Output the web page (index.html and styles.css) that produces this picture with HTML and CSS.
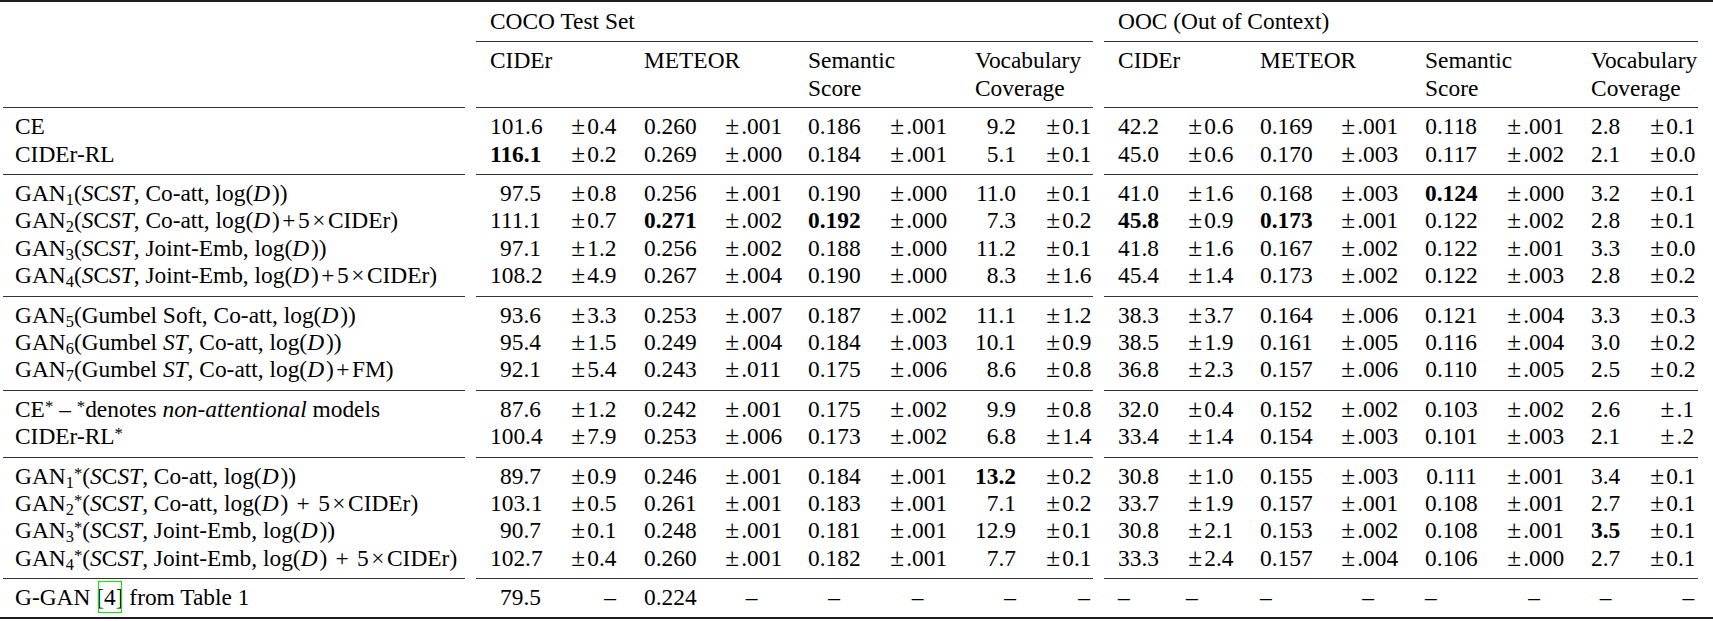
FILE: index.html
```html
<!DOCTYPE html>
<html>
<head>
<meta charset="utf-8">
<title>Results table</title>
<link rel="stylesheet" href="styles.css">
</head>
<body>
<table class="results">
<colgroup>
<col class="c-label">
<col class="c1"><col class="c2"><col class="c3"><col class="c4"><col class="c5"><col class="c6"><col class="c7"><col class="c8">
<col class="c9"><col class="c10"><col class="c11"><col class="c12"><col class="c13"><col class="c14"><col class="c15"><col class="c16">
</colgroup>
<tbody>
<tr class="grp"><td class="label"></td><td colspan="8">COCO Test Set</td><td colspan="8">OOC (Out of Context)</td></tr>
<tr class="rule cmid"><td></td><td colspan="8"><div class="line mid"></div></td><td colspan="8"><div class="line end"></div></td></tr>
<tr class="metric">
<td class="label"></td>
<td colspan="2">CIDEr</td><td colspan="2">METEOR</td><td colspan="2">Semantic<br>Score</td><td colspan="2">Vocabulary<br>Coverage</td>
<td colspan="2">CIDEr</td><td colspan="2">METEOR</td><td colspan="2">Semantic<br>Score</td><td colspan="2">Vocabulary<br>Coverage</td>
</tr>
<tr class="rule head"><td><div class="line first"></div></td><td colspan="8"><div class="line mid"></div></td><td colspan="8"><div class="line end"></div></td></tr>

<tr><td class="label">CE</td><td>101.6</td><td><span class="pm">±</span>0.4</td><td>0.260</td><td><span class="pm">±</span>.001</td><td>0.186</td><td><span class="pm">±</span>.001</td><td>9.2</td><td><span class="pm">±</span>0.1</td><td>42.2</td><td><span class="pm">±</span>0.6</td><td>0.169</td><td><span class="pm">±</span>.001</td><td>0.118</td><td><span class="pm">±</span>.001</td><td>2.8</td><td class="lastc"><span class="pm">±</span>0.1</td></tr>
<tr><td class="label">CIDEr-RL</td><td><b>116.1</b></td><td><span class="pm">±</span>0.2</td><td>0.269</td><td><span class="pm">±</span>.000</td><td>0.184</td><td><span class="pm">±</span>.001</td><td>5.1</td><td><span class="pm">±</span>0.1</td><td>45.0</td><td><span class="pm">±</span>0.6</td><td>0.170</td><td><span class="pm">±</span>.003</td><td>0.117</td><td><span class="pm">±</span>.002</td><td>2.1</td><td class="lastc"><span class="pm">±</span>0.0</td></tr>
<tr class="rule"><td><div class="line first"></div></td><td colspan="8"><div class="line mid"></div></td><td colspan="8"><div class="line end"></div></td></tr>

<tr><td class="label">GAN<sub>1</sub>(<i>S</i>C<i>ST</i>, Co-att, log(<i class="mi">D</i>))</td><td>97.5</td><td><span class="pm">±</span>0.8</td><td>0.256</td><td><span class="pm">±</span>.001</td><td>0.190</td><td><span class="pm">±</span>.000</td><td>11.0</td><td><span class="pm">±</span>0.1</td><td>41.0</td><td><span class="pm">±</span>1.6</td><td>0.168</td><td><span class="pm">±</span>.003</td><td><b>0.124</b></td><td><span class="pm">±</span>.000</td><td>3.2</td><td class="lastc"><span class="pm">±</span>0.1</td></tr>
<tr><td class="label">GAN<sub>2</sub>(<i>S</i>C<i>ST</i>, Co-att, log(<i class="mi">D</i>)<span class="op">+</span>5<span class="op">×</span>CIDEr)</td><td>111.1</td><td><span class="pm">±</span>0.7</td><td><b>0.271</b></td><td><span class="pm">±</span>.002</td><td><b>0.192</b></td><td><span class="pm">±</span>.000</td><td>7.3</td><td><span class="pm">±</span>0.2</td><td><b>45.8</b></td><td><span class="pm">±</span>0.9</td><td><b>0.173</b></td><td><span class="pm">±</span>.001</td><td>0.122</td><td><span class="pm">±</span>.002</td><td>2.8</td><td class="lastc"><span class="pm">±</span>0.1</td></tr>
<tr><td class="label">GAN<sub>3</sub>(<i>S</i>C<i>ST</i>, Joint-Emb, log(<i class="mi">D</i>))</td><td>97.1</td><td><span class="pm">±</span>1.2</td><td>0.256</td><td><span class="pm">±</span>.002</td><td>0.188</td><td><span class="pm">±</span>.000</td><td>11.2</td><td><span class="pm">±</span>0.1</td><td>41.8</td><td><span class="pm">±</span>1.6</td><td>0.167</td><td><span class="pm">±</span>.002</td><td>0.122</td><td><span class="pm">±</span>.001</td><td>3.3</td><td class="lastc"><span class="pm">±</span>0.0</td></tr>
<tr><td class="label">GAN<sub>4</sub>(<i>S</i>C<i>ST</i>, Joint-Emb, log(<i class="mi">D</i>)<span class="op">+</span>5<span class="op">×</span>CIDEr)</td><td>108.2</td><td><span class="pm">±</span>4.9</td><td>0.267</td><td><span class="pm">±</span>.004</td><td>0.190</td><td><span class="pm">±</span>.000</td><td>8.3</td><td><span class="pm">±</span>1.6</td><td>45.4</td><td><span class="pm">±</span>1.4</td><td>0.173</td><td><span class="pm">±</span>.002</td><td>0.122</td><td><span class="pm">±</span>.003</td><td>2.8</td><td class="lastc"><span class="pm">±</span>0.2</td></tr>
<tr class="rule"><td><div class="line first"></div></td><td colspan="8"><div class="line mid"></div></td><td colspan="8"><div class="line end"></div></td></tr>

<tr><td class="label">GAN<sub>5</sub>(Gumbel Soft, Co-att, log(<i class="mi">D</i>))</td><td>93.6</td><td><span class="pm">±</span>3.3</td><td>0.253</td><td><span class="pm">±</span>.007</td><td>0.187</td><td><span class="pm">±</span>.002</td><td>11.1</td><td><span class="pm">±</span>1.2</td><td>38.3</td><td><span class="pm">±</span>3.7</td><td>0.164</td><td><span class="pm">±</span>.006</td><td>0.121</td><td><span class="pm">±</span>.004</td><td>3.3</td><td class="lastc"><span class="pm">±</span>0.3</td></tr>
<tr><td class="label">GAN<sub>6</sub>(Gumbel <i>ST</i>, Co-att, log(<i class="mi">D</i>))</td><td>95.4</td><td><span class="pm">±</span>1.5</td><td>0.249</td><td><span class="pm">±</span>.004</td><td>0.184</td><td><span class="pm">±</span>.003</td><td>10.1</td><td><span class="pm">±</span>0.9</td><td>38.5</td><td><span class="pm">±</span>1.9</td><td>0.161</td><td><span class="pm">±</span>.005</td><td>0.116</td><td><span class="pm">±</span>.004</td><td>3.0</td><td class="lastc"><span class="pm">±</span>0.2</td></tr>
<tr><td class="label">GAN<sub>7</sub>(Gumbel <i>ST</i>, Co-att, log(<i class="mi">D</i>)<span class="op">+</span>FM)</td><td>92.1</td><td><span class="pm">±</span>5.4</td><td>0.243</td><td><span class="pm">±</span>.011</td><td>0.175</td><td><span class="pm">±</span>.006</td><td>8.6</td><td><span class="pm">±</span>0.8</td><td>36.8</td><td><span class="pm">±</span>2.3</td><td>0.157</td><td><span class="pm">±</span>.006</td><td>0.110</td><td><span class="pm">±</span>.005</td><td>2.5</td><td class="lastc"><span class="pm">±</span>0.2</td></tr>
<tr class="rule"><td><div class="line first"></div></td><td colspan="8"><div class="line mid"></div></td><td colspan="8"><div class="line end"></div></td></tr>

<tr><td class="label">CE<sup class="ast">*</sup> – <sup class="ast">*</sup>denotes <i>non-attentional</i> models</td><td>87.6</td><td><span class="pm">±</span>1.2</td><td>0.242</td><td><span class="pm">±</span>.001</td><td>0.175</td><td><span class="pm">±</span>.002</td><td>9.9</td><td><span class="pm">±</span>0.8</td><td>32.0</td><td><span class="pm">±</span>0.4</td><td>0.152</td><td><span class="pm">±</span>.002</td><td>0.103</td><td><span class="pm">±</span>.002</td><td>2.6</td><td class="lastc"><span class="pm">±</span>.1</td></tr>
<tr><td class="label">CIDEr-RL<sup class="ast">*</sup></td><td>100.4</td><td><span class="pm">±</span>7.9</td><td>0.253</td><td><span class="pm">±</span>.006</td><td>0.173</td><td><span class="pm">±</span>.002</td><td>6.8</td><td><span class="pm">±</span>1.4</td><td>33.4</td><td><span class="pm">±</span>1.4</td><td>0.154</td><td><span class="pm">±</span>.003</td><td>0.101</td><td><span class="pm">±</span>.003</td><td>2.1</td><td class="lastc"><span class="pm">±</span>.2</td></tr>
<tr class="rule"><td><div class="line first"></div></td><td colspan="8"><div class="line mid"></div></td><td colspan="8"><div class="line end"></div></td></tr>

<tr><td class="label">GAN<sub>1</sub><sup class="ast">*</sup>(<i>S</i>C<i>ST</i>, Co-att, log(<i class="mi">D</i>))</td><td>89.7</td><td><span class="pm">±</span>0.9</td><td>0.246</td><td><span class="pm">±</span>.001</td><td>0.184</td><td><span class="pm">±</span>.001</td><td><b>13.2</b></td><td><span class="pm">±</span>0.2</td><td>30.8</td><td><span class="pm">±</span>1.0</td><td>0.155</td><td><span class="pm">±</span>.003</td><td>0.111</td><td><span class="pm">±</span>.001</td><td>3.4</td><td class="lastc"><span class="pm">±</span>0.1</td></tr>
<tr><td class="label">GAN<sub>2</sub><sup class="ast">*</sup>(<i>S</i>C<i>ST</i>, Co-att, log(<i class="mi">D</i>) <span class="op">+</span> 5<span class="op">×</span>CIDEr)</td><td>103.1</td><td><span class="pm">±</span>0.5</td><td>0.261</td><td><span class="pm">±</span>.001</td><td>0.183</td><td><span class="pm">±</span>.001</td><td>7.1</td><td><span class="pm">±</span>0.2</td><td>33.7</td><td><span class="pm">±</span>1.9</td><td>0.157</td><td><span class="pm">±</span>.001</td><td>0.108</td><td><span class="pm">±</span>.001</td><td>2.7</td><td class="lastc"><span class="pm">±</span>0.1</td></tr>
<tr><td class="label">GAN<sub>3</sub><sup class="ast">*</sup>(<i>S</i>C<i>ST</i>, Joint-Emb, log(<i class="mi">D</i>))</td><td>90.7</td><td><span class="pm">±</span>0.1</td><td>0.248</td><td><span class="pm">±</span>.001</td><td>0.181</td><td><span class="pm">±</span>.001</td><td>12.9</td><td><span class="pm">±</span>0.1</td><td>30.8</td><td><span class="pm">±</span>2.1</td><td>0.153</td><td><span class="pm">±</span>.002</td><td>0.108</td><td><span class="pm">±</span>.001</td><td><b>3.5</b></td><td class="lastc"><span class="pm">±</span>0.1</td></tr>
<tr><td class="label">GAN<sub>4</sub><sup class="ast">*</sup>(<i>S</i>C<i>ST</i>, Joint-Emb, log(<i class="mi">D</i>) <span class="op">+</span> 5<span class="op">×</span>CIDEr)</td><td>102.7</td><td><span class="pm">±</span>0.4</td><td>0.260</td><td><span class="pm">±</span>.001</td><td>0.182</td><td><span class="pm">±</span>.001</td><td>7.7</td><td><span class="pm">±</span>0.1</td><td>33.3</td><td><span class="pm">±</span>2.4</td><td>0.157</td><td><span class="pm">±</span>.004</td><td>0.106</td><td><span class="pm">±</span>.000</td><td>2.7</td><td class="lastc"><span class="pm">±</span>0.1</td></tr>
<tr class="rule"><td><div class="line first"></div></td><td colspan="8"><div class="line mid"></div></td><td colspan="8"><div class="line end"></div></td></tr>

<tr class="last"><td class="label">G-GAN [<span class="cite">4</span>] from Table 1</td><td>79.5</td><td>–</td><td>0.224</td><td class="dc">–</td><td class="dc">–</td><td class="dc">–</td><td>–</td><td>–</td><td class="dl">–</td><td class="dl">–</td><td class="dl">–</td><td class="dc">–</td><td class="dl">–</td><td class="dc">–</td><td class="dc">–</td><td class="lastc">–</td></tr>
</tbody>
</table>
</body>
</html>
```

FILE: styles.css
```css
html, body {
  margin: 0;
  padding: 0;
  background: #ffffff;
}

body {
  font-family: "Liberation Serif", "Tinos", "Times New Roman", serif;
  font-size: 23.4px;
  color: #000000;
}

.results {
  width: 1713px;
  table-layout: fixed;
  border-collapse: separate;
  border-spacing: 0;
  border-top: 2px solid #1e1e1e;
  border-bottom: 2px solid #1e1e1e;
  font-family: "Liberation Serif", "Tinos", "Times New Roman", serif;
  font-size: 23.4px;
}

.c-label { width: 476px; }
.c1 { width: 79px; }
.c2 { width: 75px; }
.c3 { width: 79px; }
.c4 { width: 85px; }
.c5 { width: 80px; }
.c6 { width: 87px; }
.c7 { width: 69px; }
.c8 { width: 74px; }
.c9 { width: 68px; }
.c10 { width: 74px; }
.c11 { width: 79px; }
.c12 { width: 86px; }
.c13 { width: 80px; }
.c14 { width: 86px; }
.c15 { width: 57px; }
.c16 { width: 79px; }

.results td {
  box-sizing: border-box;
  padding: 0 14px;
  height: 27.4px;
  line-height: 27.4px;
  white-space: nowrap;
  text-align: right;
  vertical-align: top;
  font-family: "Liberation Serif", "Tinos", "Times New Roman", serif;
}

.results td.label {
  padding: 0 0 0 15px;
  text-align: left;
}

.results td.lastc {
  padding-right: 19px;
}

.results td.dc { text-align: center; }
.results td.dl { text-align: left; }

.grp td,
.metric td {
  text-align: left;
}

.grp td {
  padding-top: 6.3px;
  height: auto;
}

.metric td {
  height: auto;
}

.rule td {
  padding: 6px 0 5px;
  height: auto;
  line-height: 0;
}

.rule.cmid td {
  padding: 5.3px 0;
}

.rule.head td {
  padding: 5px 0 5px;
}

.line {
  height: 1px;
  background: #333333;
}

.line.first { margin: 0 11px 0 3px; }
.line.mid { margin: 0 11px 0 0; }
.line.end { margin: 0 15px 0 0; }

.last td {
  padding-bottom: 5.6px;
  height: auto;
}

.pm {
  display: inline-block;
  width: 0.72em;
  font-size: 1.08em;
  line-height: 1;
  text-align: center;
}

.op {
  display: inline-block;
  width: 0.778em;
  line-height: 1;
  text-align: center;
}

i.mi {
  padding-right: 0.08em;
}

sub {
  font-size: 0.7em;
  vertical-align: -0.22em;
  line-height: 0;
}

sup.ast {
  font-size: 0.72em;
  vertical-align: 0.3em;
  line-height: 0;
}

.cite {
  outline: 1.6px solid #00ee00;
  padding: 2px 5px;
  margin: 0 -5px;
}
```
